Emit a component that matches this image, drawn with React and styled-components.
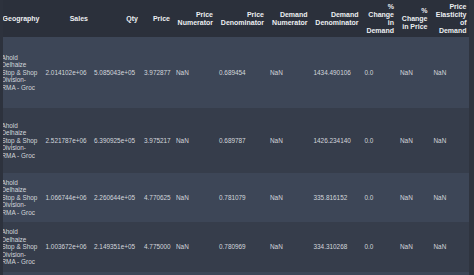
import React from "react";
import styled, { createGlobalStyle } from "styled-components";

const GlobalStyle = createGlobalStyle`
	html, body {
		margin: 0;
		padding: 0;
		background: #363d4b;
		overflow: hidden;
	}
`;

const Frame = styled.div`
	height: 275px;
	overflow: hidden;
	background: #363d4b;
	border-left: 3px solid #2d323d;
	border-right: 5px solid #2f343f;
	font-family: "Liberation Sans", Arial, sans-serif;
`;

const Table = styled.table`
	margin-left: -4.5px;
	width: 471px;
	border-collapse: collapse;
	border-spacing: 0;
	table-layout: fixed;
`;

const HeadRow = styled.tr`
	height: 37px;
	background: #2b303b;
`;

const HeadCell = styled.th`
	padding: 0 3px;
	text-align: right;
	vertical-align: middle;
	font-size: 7px;
	line-height: 8px;
	font-weight: 700;
	color: #eceef1;
	overflow: hidden;
`;

const Row = styled.tr`
	height: ${p => p.$h}px;
	background: ${p => (p.$odd ? "#3d4657" : "#363d4b")};
`;

const Cell = styled.td`
	padding: 0 3px;
	text-align: left;
	vertical-align: middle;
	font-size: 6.4px;
	line-height: 7.5px;
	color: #d3d6db;
	white-space: ${p => (p.$wrap ? "normal" : "nowrap")};
	overflow: hidden;
`;

const columns = [
	{ label: "Geography", width: 44 },
	{ label: "Sales", width: 48.5 },
	{ label: "Qty", width: 50 },
	{ label: "Price", width: 32 },
	{ label: "Price Numerator", width: 43 },
	{ label: "Price Denominator", width: 51 },
	{ label: "Demand Numerator", width: 43.5 },
	{ label: "Demand Denominator", width: 51 },
	{ label: "% Change in Demand", width: 35.5 },
	{ label: "% Change in Price", width: 33.5 },
	{ label: "Price Elasticity of Demand", width: 39 }
];

const geo = "Ahold Delhaize Stop & Shop Division-RMA - Groc";

const rows = [
	{ h: 71, values: ["2.014102e+06", "5.085043e+05", "3.972877", "NaN", "0.689454", "NaN", "1434.490106", "0.0", "NaN", "NaN"] },
	{ h: 65, values: ["2.521787e+06", "6.390925e+05", "3.975217", "NaN", "0.689787", "NaN", "1426.234140", "0.0", "NaN", "NaN"] },
	{ h: 49, values: ["1.066744e+06", "2.260644e+05", "4.770625", "NaN", "0.781079", "NaN", "335.816152", "0.0", "NaN", "NaN"] },
	{ h: 50, values: ["1.003672e+06", "2.149351e+05", "4.775000", "NaN", "0.780969", "NaN", "334.310268", "0.0", "NaN", "NaN"] }
];

export default function App() {
	return (
		<>
			<GlobalStyle />
			<Frame>
				<Table>
					<colgroup>
						{columns.map(c => (
							<col key={c.label} style={{ width: c.width }} />
						))}
					</colgroup>
					<thead>
						<HeadRow>
							{columns.map(c => (
								<HeadCell key={c.label}>{c.label}</HeadCell>
							))}
						</HeadRow>
					</thead>
					<tbody>
						{rows.map((r, i) => (
							<Row key={i} $h={r.h} $odd={i % 2 === 0}>
								<Cell $wrap>{geo}</Cell>
								{r.values.map((v, j) => (
									<Cell key={j}>{v}</Cell>
								))}
							</Row>
						))}
						<Row $h={40} $odd>
							{columns.map(c => (
								<Cell key={c.label} />
							))}
						</Row>
					</tbody>
				</Table>
			</Frame>
		</>
	);
}
